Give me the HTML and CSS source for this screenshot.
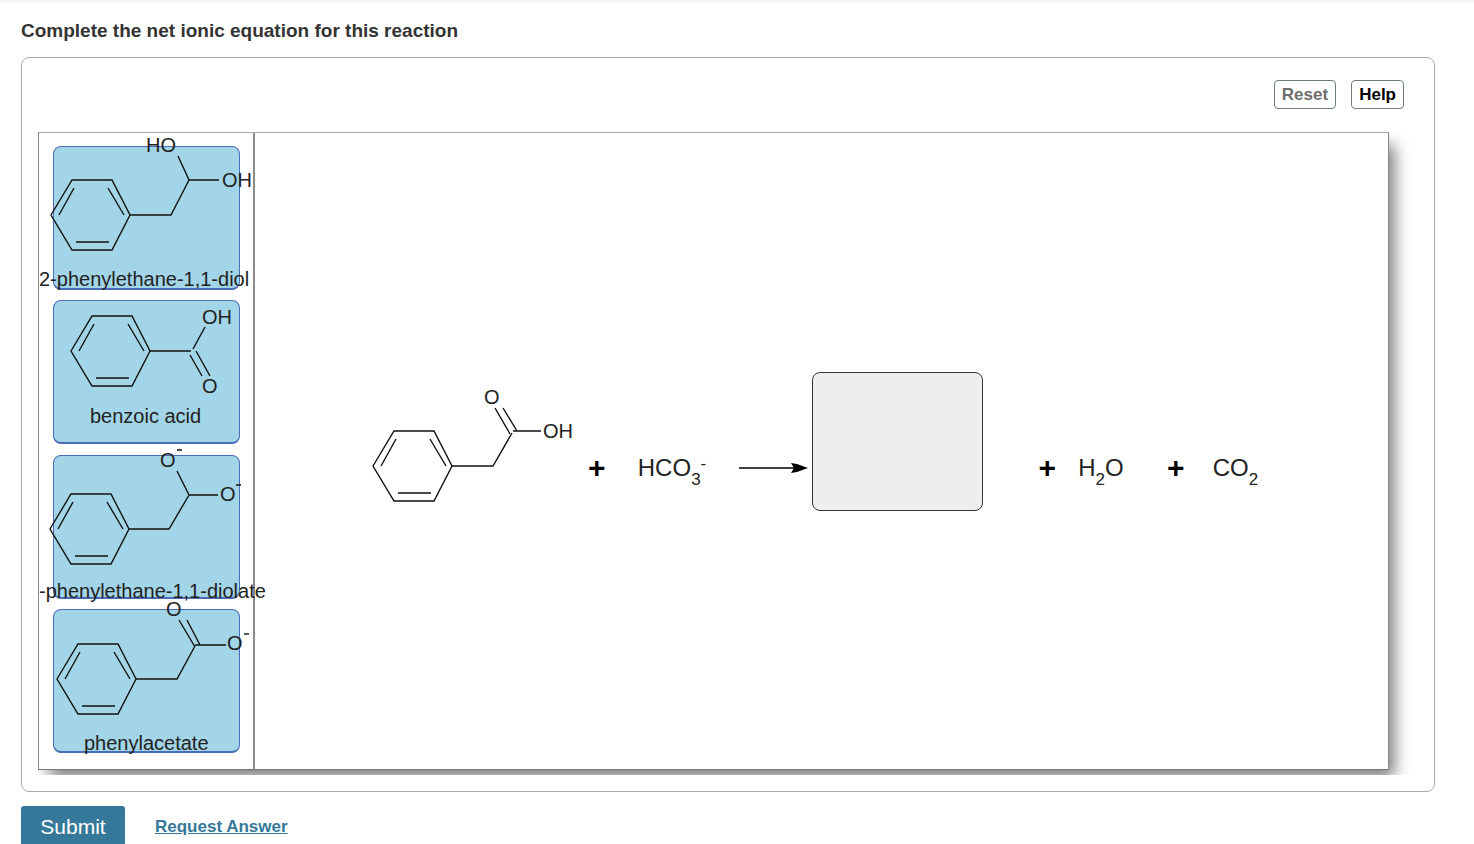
FILE: index.html
```html
<!DOCTYPE html>
<html lang="en">
<head>
    <meta charset="UTF-8">
    <meta name="viewport" content="width=device-width, initial-scale=1.0">
    <title>Net ionic equation</title>
    <link rel="stylesheet" href="styles.css">
</head>
<body>

    <!-- shared benzene ring -->
    <svg class="defs" width="0" height="0" aria-hidden="true">
        <defs>
            <g id="ring">
                <path d="M0 35 L21 0 H61 L79 35 L61 70 H21 Z M23 8 L8 35 M57 8 L73 35 M25 62 H58"/>
            </g>
        </defs>
    </svg>

    <main class="question">
        <h1 class="title">Complete the net ionic equation for this reaction</h1>

        <div class="panel">
            <div class="toolbar">
                <button type="button" class="tool-btn reset">Reset</button>
                <button type="button" class="tool-btn">Help</button>
            </div>

            <div class="stage-wrap">
                <div class="stage">
                    <div class="bank">
                        <div class="card" draggable="true">
                            <svg class="molecule" viewBox="1 1 187 144">
                                <use href="#ring" x="-2" y="34"/>
                                <path d="M77 69 H118 L136 34 L125 10 M136 34 H166"/>
                                <text x="93" y="6">HO</text>
                                <text x="169" y="41">OH</text>
                                <text x="-14" y="140">2-phenylethane-1,1-diol</text>
                            </svg>
                        </div>
                        <div class="card" draggable="true">
                            <svg class="molecule" viewBox="1 1 187 144">
                                <use href="#ring" x="18" y="16"/>
                                <path d="M97 51 H138 M140 49 L152 27 M143 51 L157 76 M137 55 L149 76"/>
                                <text x="149" y="24">OH</text>
                                <text x="149" y="93">O</text>
                                <text x="37" y="123">benzoic acid</text>
                            </svg>
                        </div>
                        <div class="card" draggable="true">
                            <svg class="molecule" viewBox="1 1 187 144">
                                <use href="#ring" x="-3" y="39"/>
                                <path d="M76 74 H116 L136 40 L124 16 M136 40 H165"/>
                                <path d="M124 -5 H129 M183 30 H188"/>
                                <text x="107" y="12">O</text>
                                <text x="167" y="46">O</text>
                                <text x="-14" y="143">-phenylethane-1,1-diolate</text>
                            </svg>
                        </div>
                        <div class="card" draggable="true">
                            <svg class="molecule" viewBox="1 1 187 144">
                                <use href="#ring" x="4" y="35"/>
                                <path d="M83 70 H124 L142 37 M126 11 L142 38 M134 11 L147 36 M142 36 H173"/>
                                <path d="M191 25 H196"/>
                                <text x="113" y="7">O</text>
                                <text x="174" y="41">O</text>
                                <text x="31" y="141">phenylacetate</text>
                            </svg>
                        </div>
                    </div>

                    <div class="equation">
                        <svg class="structure" viewBox="3 1 202 126">
                            <use href="#ring" x="1" y="53"/>
                            <path d="M80 88 H121 L140 55 M123 30 L138 56 M131 30 L145 53 M141 53 H169"/>
                            <text x="112" y="26">O</text>
                            <text x="171" y="60">OH</text>
                        </svg>
                        <span class="term plus near">+</span>
                        <span class="term formula">HCO<sub>3</sub><sup>-</sup></span>
                        <span class="term arrow">
                            <svg width="70" height="12" viewBox="0 0 70 12">
                                <path d="M0 6 H60" stroke="#000" stroke-width="1.5"/>
                                <path d="M52 1 L58 2 L69 6 L58 10 L52 11 L55 6 Z"/>
                            </svg>
                        </span>
                        <div class="drop-box"></div>
                        <span class="term plus far">+</span>
                        <span class="term formula">H<sub>2</sub>O</span>
                        <span class="term plus">+</span>
                        <span class="term formula">CO<sub>2</sub></span>
                    </div>
                </div>
            </div>
        </div>

        <div class="actions">
            <button type="submit" class="submit">Submit</button>
            <a href="#" class="request">Request Answer</a>
        </div>
    </main>

</body>
</html>
```

FILE: styles.css
```css
* {
    box-sizing: border-box;
}

body {
    margin: 0;
    border-top: 3px solid #f8f8f8;
    background-color: #fff;
    font-family: "Liberation Sans", Arial, sans-serif;
    overflow: hidden;
}

.defs {
    display: block;
}

.question {
    padding: 16px 39px 0 21px;
}

.title {
    margin: 0 0 14px;
    font-size: 19px;
    line-height: 24px;
    color: #333;
}

.panel {
    padding: 22px 15px 16px 16px;
    border: 1px solid #aaa;
    border-radius: 8px;
}

.toolbar {
    display: flex;
    justify-content: flex-end;
    gap: 15px;
    padding-right: 15px;
    margin-bottom: 23px;
}

.tool-btn {
    height: 29px;
    padding: 0 7px;
    border: 1px solid #6c7a84;
    border-radius: 4px;
    background-color: #fff;
    font: bold 17px "Liberation Sans", Arial, sans-serif;
    color: #000;
    cursor: pointer;
}

.tool-btn.reset {
    color: #6e6e6e;
}

/* cuts the stage shadow off just below the frame */
.stage-wrap {
    padding: 0 30px 5px 0;
    overflow: hidden;
}

.stage {
    display: flex;
    border: 1px solid #999;
    border-color: #aaa #888 #777;
    background-color: #fff;
    box-shadow: 8px 10px 15px -3px #777;
    overflow: hidden;
}

.bank {
    display: flex;
    flex-direction: column;
    flex-shrink: 0;
    justify-content: space-between;
    width: 216px;
    min-height: 636px;
    padding: 13px 13px 16px 14px;
    border-right: 2px solid #8c8c8c;
}

.card {
    height: 144px;
    border: 1px solid #4a6db8;
    border-bottom-width: 2px;
    border-radius: 8px;
    background-color: #a2d5e7;
    cursor: move;
}

.molecule,
.structure {
    display: block;
    overflow: visible;
    fill: none;
    stroke: #111;
    stroke-width: 1.4;
}

.molecule {
    width: 187px;
    height: 144px;
}

.structure {
    flex-shrink: 0;
    width: 202px;
    height: 126px;
}

.molecule text,
.structure text {
    fill: #222;
    stroke: none;
    font-size: 20px;
}

.equation {
    display: flex;
    flex: 1;
    align-items: center;
    justify-content: center;
    padding: 0 10px 19px 0;
}

/* symbols sit a little lower than the drop box centre */
.term {
    flex-shrink: 0;
    padding-top: 52px;
    line-height: 24px;
}

.plus {
    width: 18px;
    margin: 0 28px 0 43px;
    font-size: 30px;
    font-weight: bold;
    text-align: center;
}

.plus.near {
    margin: 0 32px 0 11px;
}

.plus.far {
    margin: 0 22px 0 55px;
}

.formula {
    font-size: 24px;
    color: #222;
}

.formula sub,
.formula sup {
    font-size: 17px;
    line-height: 0;
}

.formula sub {
    vertical-align: -9px;
}

.formula sup {
    vertical-align: 7px;
}

.arrow {
    display: flex;
    align-items: center;
    height: 76px;
    margin: 0 3px 0 33px;
}

.drop-box {
    flex-shrink: 0;
    width: 171px;
    height: 139px;
    border: 1px solid #334;
    border-radius: 8px;
    background-color: #eee;
}

.actions {
    display: flex;
    align-items: center;
    gap: 30px;
    margin-top: 14px;
}

.submit {
    width: 104px;
    height: 42px;
    border: 0;
    border-radius: 3px;
    background-color: #35789a;
    font: 21px "Liberation Sans", Arial, sans-serif;
    color: #fff;
    cursor: pointer;
}

.request {
    font-size: 17px;
    font-weight: bold;
    color: #35789a;
}
```
